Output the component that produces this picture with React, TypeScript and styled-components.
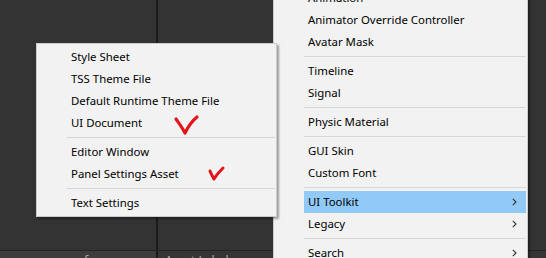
import React from 'react';
import styled, { createGlobalStyle } from 'styled-components';

const GlobalStyle = createGlobalStyle`
  html, body {
    margin: 0;
    padding: 0;
    background: #333333;
  }
`;

const Screen = styled.div`
  position: relative;
  width: 546px;
  height: 258px;
  overflow: hidden;
  display: flex;
  flex-direction: column;
  background: #333333;
  font-family: "Noto Sans", "Noto Sans CJK KR", sans-serif;
`;

const MainArea = styled.div`
  display: flex;
  flex: 0 0 250px;
`;

const Pane = styled.div<{ $width?: number }>`
  flex: ${(p) => (p.$width ? `0 0 ${p.$width}px` : '1')};
  background: #333333;
`;

const Divider = styled.div`
  flex: 0 0 2px;
  background: #1c1c1c;
`;

const BottomBar = styled.div`
  display: flex;
  flex: 1;
  min-height: 0;
  overflow: hidden;
  border-top: 1px solid #232323;
`;

const Toolbar = styled.div<{ $dark?: boolean }>`
  box-sizing: border-box;
  flex: ${(p) => (p.$dark ? '1' : '0 0 156px')};
  background: ${(p) => (p.$dark ? '#353535' : '#3d3d3d')};
  color: #a8a8a8;
  font-size: 12px;
  line-height: 12px;
  padding-top: 4px;
  padding-left: ${(p) => (p.$dark ? '7px' : '84px')};
  white-space: nowrap;
  overflow: hidden;
`;

const Menu = styled.div<{ $left: number; $top: number; $width: number }>`
  position: absolute;
  left: ${(p) => p.$left}px;
  top: ${(p) => p.$top}px;
  width: ${(p) => p.$width}px;
  box-sizing: border-box;
  background: #f2f2f2;
  border: 1px solid #cccccc;
  padding: 2px 1px 2px 2px;
  box-shadow: 2px 2px 2px rgba(0, 0, 0, 0.35);
  display: flex;
  flex-direction: column;
`;

const Item = styled.div<{ $active?: boolean }>`
  box-sizing: border-box;
  height: 22px;
  margin-left: 28px;
  padding: 0 9px 1px 4px;
  display: flex;
  align-items: center;
  justify-content: space-between;
  background: ${(p) => (p.$active ? '#91c9f7' : 'transparent')};
  color: #000000;
  font-size: 11.4px;
  white-space: nowrap;
`;

const Separator = styled.div`
  height: 1px;
  margin: 3px 0 3px 28px;
  background: #d7d7d7;
`;

const Chevron = () => (
  <svg width="5" height="8" viewBox="0 0 5 8">
    <path d="M0.8 0.8 L4 4 L0.8 7.2" fill="none" stroke="#333" strokeWidth="1.1" />
  </svg>
);

const Mark = styled.svg<{ $left: number; $top: number }>`
  position: absolute;
  left: ${(p) => p.$left}px;
  top: ${(p) => p.$top}px;
  overflow: visible;
`;

type Entry = { label?: string; sub?: boolean; active?: boolean };

const leftEntries: Entry[] = [
  { label: 'Style Sheet' },
  { label: 'TSS Theme File' },
  { label: 'Default Runtime Theme File' },
  { label: 'UI Document' },
  {},
  { label: 'Editor Window' },
  { label: 'Panel Settings Asset' },
  {},
  { label: 'Text Settings' },
];

const rightEntries: Entry[] = [
  { label: 'Animation' },
  { label: 'Animator Override Controller' },
  { label: 'Avatar Mask' },
  {},
  { label: 'Timeline' },
  { label: 'Signal' },
  {},
  { label: 'Physic Material' },
  {},
  { label: 'GUI Skin' },
  { label: 'Custom Font' },
  {},
  { label: 'UI Toolkit', sub: true, active: true },
  { label: 'Legacy', sub: true },
  {},
  { label: 'Search', sub: true },
];

const renderEntries = (entries: Entry[]) =>
  entries.map((e, i) =>
    e.label ? (
      <Item key={i} $active={e.active}>
        <span>{e.label}</span>
        {e.sub && <Chevron />}
      </Item>
    ) : (
      <Separator key={i} />
    )
  );

export default function App() {
  return (
    <>
      <GlobalStyle />
      <Screen>
        <MainArea>
          <Pane $width={156} />
          <Divider />
          <Pane />
        </MainArea>
        <BottomBar>
          <Toolbar>f</Toolbar>
          <Divider />
          <Toolbar $dark>Asset Labels</Toolbar>
        </BottomBar>

        <Menu $left={273} $top={-16} $width={255}>
          {renderEntries(rightEntries)}
        </Menu>

        <Menu $left={36} $top={43} $width={241}>
          {renderEntries(leftEntries)}
        </Menu>

        <Mark $left={174} $top={116} width="26" height="20" viewBox="0 0 26 20">
          <path
            d="M2 3 C4 6 8 11 11 17 C14 11 18 5 23 1"
            fill="none"
            stroke="#e3141c"
            strokeWidth="3.2"
            strokeLinecap="round"
            strokeLinejoin="round"
          />
        </Mark>
        <Mark $left={208} $top={167} width="17" height="14" viewBox="0 0 17 14">
          <path
            d="M2 4 C3 7 5 10 6 12 C9 7 12 4 15 1"
            fill="none"
            stroke="#e3141c"
            strokeWidth="3"
            strokeLinecap="round"
            strokeLinejoin="round"
          />
        </Mark>
      </Screen>
    </>
  );
}
